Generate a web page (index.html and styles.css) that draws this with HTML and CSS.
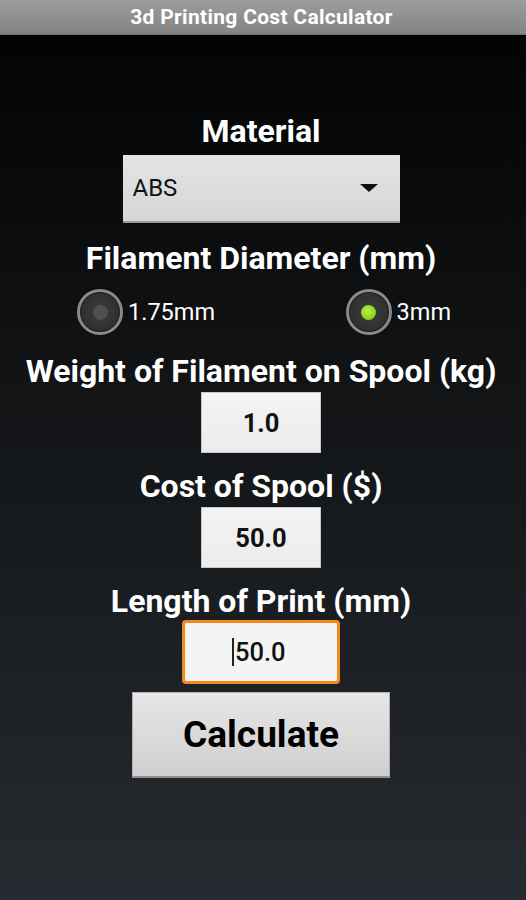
FILE: index.html
```html
<!DOCTYPE html>
<html>
<head>
<meta charset="utf-8">
<link rel="stylesheet" href="styles.css">
</head>
<body>
<div class="titlebar">3d Printing Cost Calculator</div>
<main class="content">
  <h2 class="heading h-material">Material</h2>
  <div class="spinner">
    <span class="spinner-text">ABS</span>
    <svg class="spinner-arrow" width="18" height="8" viewBox="0 0 18 8"><polygon points="0,0 18,0 9,8" fill="#111"/></svg>
  </div>
  <h2 class="heading h-diam">Filament Diameter (mm)</h2>
  <div class="radio-row">
    <label class="radio">
      <span class="radio-circle"><span class="radio-dot"></span></span>
      <span class="radio-label">1.75mm</span>
    </label>
    <label class="radio">
      <span class="radio-circle"><span class="radio-dot checked"></span></span>
      <span class="radio-label">3mm</span>
    </label>
  </div>
  <h2 class="heading h-weight">Weight of Filament on Spool (kg)</h2>
  <div class="field">1.0</div>
  <h2 class="heading h-cost">Cost of Spool ($)</h2>
  <div class="field">50.0</div>
  <h2 class="heading h-length">Length of Print (mm)</h2>
  <div class="field focused"><span class="caret"></span>50.0</div>
  <div class="button">Calculate</div>
</main>
</body>
</html>
```
FILE: styles.css
```css
html, body {
  margin: 0;
  padding: 0;
}
body {
  width: 526px;
  height: 900px;
  overflow: hidden;
  font-family: Roboto, "Liberation Sans", sans-serif;
  background: linear-gradient(to bottom, #020202 0px, #0a0b0c 200px, #181b1e 550px, #262b31 900px);
  color: #fff;
}
.titlebar {
  height: 35px;
  box-sizing: border-box;
  border-bottom: 1px solid #6e6e6e;
  background: linear-gradient(to bottom, #9d9d9d, #838383);
  color: #fff;
  font-weight: 700;
  font-size: 21px;
  letter-spacing: 0.3px;
  line-height: 34px;
  text-align: center;
  padding-right: 3px;
}
.content {
  display: flex;
  flex-direction: column;
  align-items: center;
  padding-top: 78px;
  padding-right: 4px;
}
.heading {
  margin: 0;
  font-size: 32px;
  font-weight: 700;
  line-height: 36px;
  height: 36px;
  color: #fff;
  white-space: nowrap;
}
.spinner {
  margin-top: 6px;
  width: 277px;
  height: 68px;
  box-sizing: border-box;
  background: linear-gradient(to bottom, #e3e4e4, #d6d6d6);
  border-bottom: 2px solid #9a9a9a;
  display: flex;
  align-items: center;
  justify-content: space-between;
  padding: 0 22px 0 10px;
  color: #111;
}
.spinner-text {
  font-size: 24px;
  font-weight: 400;
}
.spinner-arrow {
  display: block;
}
.h-diam {
  margin-top: 17px;
}
.radio-row {
  margin-top: 13px;
  width: 374px;
  display: flex;
  justify-content: space-between;
  margin-left: 6px;
}
.radio {
  display: flex;
  align-items: center;
  gap: 5px;
}
.radio-circle {
  width: 46px;
  height: 46px;
  box-sizing: border-box;
  border-radius: 50%;
  border: 3px solid #8a8a8a;
  background: radial-gradient(circle, #3c3c3c 0%, #2a2a2a 100%);
  box-shadow: inset 0 0 0 1px #1a1a1a;
  display: flex;
  align-items: center;
  justify-content: center;
}
.radio-dot {
  width: 15px;
  height: 15px;
  border-radius: 50%;
  background: #505050;
}
.radio-dot.checked {
  background: radial-gradient(circle at 45% 40%, #b8f04a 0%, #8fd41c 60%, #6fb010 100%);
}
.radio-label {
  font-size: 23.5px;
  color: #fff;
}
.h-weight {
  margin-top: 18px;
}
.field {
  margin-top: 3px;
  width: 120px;
  height: 61px;
  box-sizing: border-box;
  background: linear-gradient(to bottom, #f3f3f3, #ececec);
  border: 1px solid #c8c8c8;
  color: #111;
  font-weight: 700;
  font-size: 25.5px;
  display: flex;
  align-items: center;
  justify-content: center;
}
.h-cost, .h-length {
  margin-top: 15px;
}
.field.focused {
  margin-top: 1px;
  width: 158px;
  height: 64px;
  border: 3px solid #f08a1c;
  border-radius: 4px;
  background: #f3f4f4;
  font-weight: 500;
  padding-right: 4px;
}
.caret {
  display: inline-block;
  width: 1.5px;
  height: 28px;
  background: #222;
  margin-right: 1px;
}
.button {
  margin-top: 8px;
  width: 258px;
  height: 86px;
  box-sizing: border-box;
  background: linear-gradient(to bottom, #e6e6e6, #cfcfcf);
  border: 1px solid #b0b0b0;
  border-bottom: 2px solid #8e8e8e;
  color: #000;
  font-weight: 700;
  font-size: 37px;
  display: flex;
  align-items: center;
  justify-content: center;
}
```
